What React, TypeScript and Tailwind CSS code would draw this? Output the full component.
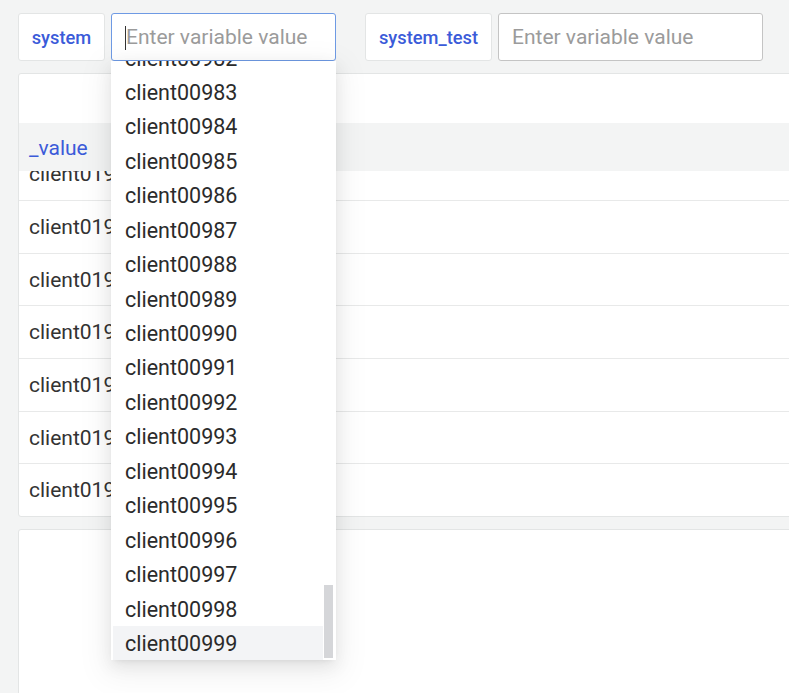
import React from 'react';

const options = Array.from({ length: 18 }, (_, i) => `client00${982 + i}`);
const rows = ['client01993', 'client01994', 'client01995', 'client01996', 'client01997', 'client01998', 'client01999'];

function VarLabel({ name, width }: { name: string; width: string }) {
  return (
    <div
      className={`flex h-[48px] shrink-0 items-center justify-center rounded-[3px] border border-[#e3e5e5] bg-white pt-[2px] text-[18.3px] font-medium text-[#3b5bd9] ${width}`}
    >
      {name}
    </div>
  );
}

export default function App() {
  return (
    <div
      className="h-[693px] overflow-hidden bg-[#f3f4f4] pl-[18px] pt-[13px]"
      style={{ fontFamily: 'Roboto, "Liberation Sans", sans-serif' }}
    >
      {/* variable bar */}
      <div className="flex items-start">
        <VarLabel name="system" width="w-[87px]" />
        <div className="relative ml-[6px] h-[48px] w-[225px] shrink-0">
          <div className="flex h-full items-center rounded-[3px] border border-[#6e9ae4] bg-white pl-[13px] pt-[2px] text-[21px] text-[#9b9b9b]">
            <span className="h-[24px] w-px bg-[#333]" />
            <span>Enter variable value</span>
          </div>

          {/* dropdown */}
          <div className="absolute left-0 top-[48px] z-10 h-[599px] w-[225px] overflow-hidden bg-white shadow-[0_6px_16px_0_rgba(0,0,0,0.08),0_3px_6px_-4px_rgba(0,0,0,0.12),0_9px_28px_8px_rgba(0,0,0,0.05)]">
            <div className="mt-[-20.6px] pl-[2px] pr-[13px]">
              {options.map((o, i) => (
                <div
                  key={o}
                  className={`flex h-[34.44px] items-center pl-[12px] pt-[2px] text-[21.5px] text-[#2b2b2b] ${
                    i === options.length - 1 ? 'bg-[#f3f4f6]' : ''
                  }`}
                >
                  {o}
                </div>
              ))}
            </div>
            <div className="absolute right-[3px] top-[524px] h-[73px] w-[9px] bg-[#d5d6d9]" />
          </div>
        </div>

        <div className="ml-[29px]">
          <VarLabel name="system_test" width="w-[127px]" />
        </div>
        <div className="ml-[6px] flex h-[48px] w-[265px] shrink-0 items-center rounded-[3px] border border-[#c4c4c4] bg-white pl-[13px] pt-[2px] text-[21px] text-[#9b9b9b]">
          Enter variable value
        </div>
      </div>

      {/* table panel */}
      <div className="mt-[12px] w-[800px] overflow-hidden rounded-[3px] border border-[#e3e5e5] bg-white">
        <div className="h-[49px]" />
        <div className="flex h-[48px] items-center bg-[#f3f4f4] pl-[10px] pt-[3px] text-[21px] text-[#3b5bd9]">_value</div>
        <div className="h-[345px] overflow-hidden">
          <div className="mt-[-22.7px]">
            {rows.map((r) => (
              <div
                key={r}
                className="flex h-[52.67px] items-center border-b border-[#e8e9e9] pl-[10px] pt-[2px] text-[21px] text-[#333]"
              >
                {r}
              </div>
            ))}
          </div>
        </div>
      </div>

      {/* second panel */}
      <div className="mt-[12px] h-[200px] w-[800px] rounded-[3px] border border-[#e3e5e5] bg-white" />
    </div>
  );
}
